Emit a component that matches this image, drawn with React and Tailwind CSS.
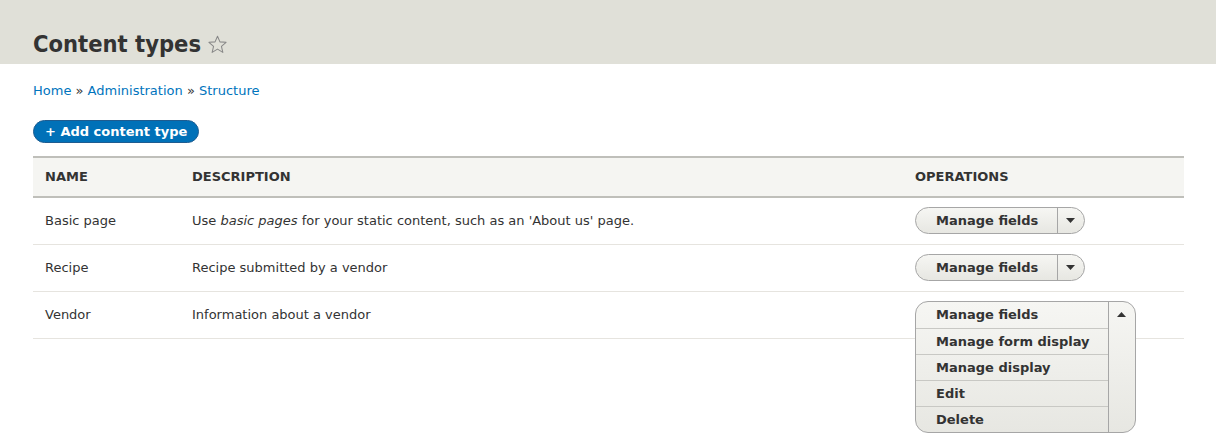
import { useState } from 'react';

const types = [
  { name: 'Basic page', desc: <>Use <em>basic pages</em> for your static content, such as an 'About us' page.</> },
  { name: 'Recipe', desc: 'Recipe submitted by a vendor' },
  { name: 'Vendor', desc: 'Information about a vendor', open: true },
];

const ops = ['Manage fields', 'Manage form display', 'Manage display', 'Edit', 'Delete'];

function Arrow({ up }) {
  return (
    <svg width="9" height="5" viewBox="0 0 9 5" className="block">
      {up ? <path d="M0 5 L4.5 0 L9 5 Z" fill="#333" /> : <path d="M0 0 L4.5 5 L9 0 Z" fill="#333" />}
    </svg>
  );
}

function Dropbutton({ open }) {
  if (!open) {
    return (
      <div className="flex h-[27px] w-[170px] rounded-full border border-[#a6a6a6] bg-gradient-to-b from-[#f6f6f3] to-[#e7e7e2] overflow-hidden">
        <a className="flex-1 flex items-center pl-[20px] font-bold text-[13px] text-[#333]">Manage fields</a>
        <span className="w-[27px] border-l border-[#a6a6a6] flex items-center justify-center pr-[2px]">
          <Arrow />
        </span>
      </div>
    );
  }
  return (
    <div className="absolute left-0 top-0 flex w-[221px] rounded-[13px] border border-[#a6a6a6] bg-gradient-to-b from-[#f6f6f3] to-[#e7e7e2] overflow-hidden z-10">
      <ul className="flex-1">
        {ops.map((op, i) => (
          <li key={op} className={`h-[26px] flex items-center pl-[20px] font-bold text-[13px] text-[#333] ${i > 0 ? 'border-t border-[#c8c8c4]' : ''}`}>
            {op}
          </li>
        ))}
      </ul>
      <span className="w-[27px] border-l border-[#a6a6a6] flex justify-center pt-[10px] pr-[2px]">
        <Arrow up />
      </span>
    </div>
  );
}

export default function App() {
  const [fav, setFav] = useState(false);
  return (
    <div className="min-h-[433px] bg-white text-[#333] font-['DejaVu_Sans',sans-serif]">
      {/* page header */}
      <div className="h-16 bg-[#e0e0d8] px-[33px] pt-[29px]">
        <h1 className="flex items-center text-[23.5px] leading-[30px] font-bold text-[#333]">
          <span className="font-['DejaVu_Sans_Condensed','DejaVu_Sans',sans-serif] [font-stretch:condensed]">Content types</span>
          <button className="ml-[6px] mt-[1px]" onClick={() => setFav(f => !f)}>
            <svg width="21" height="21" viewBox="0 0 24 24">
              <path
                d="M12 2.5 L14.8 9 L21.8 9.5 L16.5 14.1 L18.1 21 L12 17.3 L5.9 21 L7.5 14.1 L2.2 9.5 L9.2 9 Z"
                fill={fav ? '#ffcc00' : 'none'}
                stroke="#888"
                strokeWidth="1.2"
                strokeLinejoin="round"
              />
            </svg>
          </button>
        </h1>
      </div>

      <div className="px-[33px] pr-[32px]">
        {/* breadcrumb */}
        <nav className="pt-[19px] text-[13px] leading-[16px] text-[#333]">
          <a className="text-[#0074bd]">Home</a> » <a className="text-[#0074bd]">Administration</a> » <a className="text-[#0074bd]">Structure</a>
        </nav>

        <button className="mt-[21px] h-[23px] px-[11px] rounded-full bg-[#0071b8] border border-[#1e5c90] text-white font-bold text-[13px] leading-none">
          + Add content type
        </button>

        {/* table */}
        <table className="mt-[13px] w-full border-collapse text-[13px] text-left">
          <thead>
            <tr className="bg-[#f5f5f2] border-t-2 border-b-2 border-[#bfbfba] h-[40px]">
              <th className="pl-[12px] w-[159px] font-bold uppercase text-[#333]">Name</th>
              <th className="font-bold uppercase text-[#333]">Description</th>
              <th className="w-[269px] font-bold uppercase text-[#333]">Operations</th>
            </tr>
          </thead>
          <tbody>
            {types.map(t => (
              <tr key={t.name} className="h-[47px] border-b border-[#e6e4df]">
                <td className="pl-[12px]">{t.name}</td>
                <td>{t.desc}</td>
                <td>
                  <div className="relative h-[27px]">
                    <Dropbutton open={t.open} />
                  </div>
                </td>
              </tr>
            ))}
          </tbody>
        </table>
      </div>
    </div>
  );
}
